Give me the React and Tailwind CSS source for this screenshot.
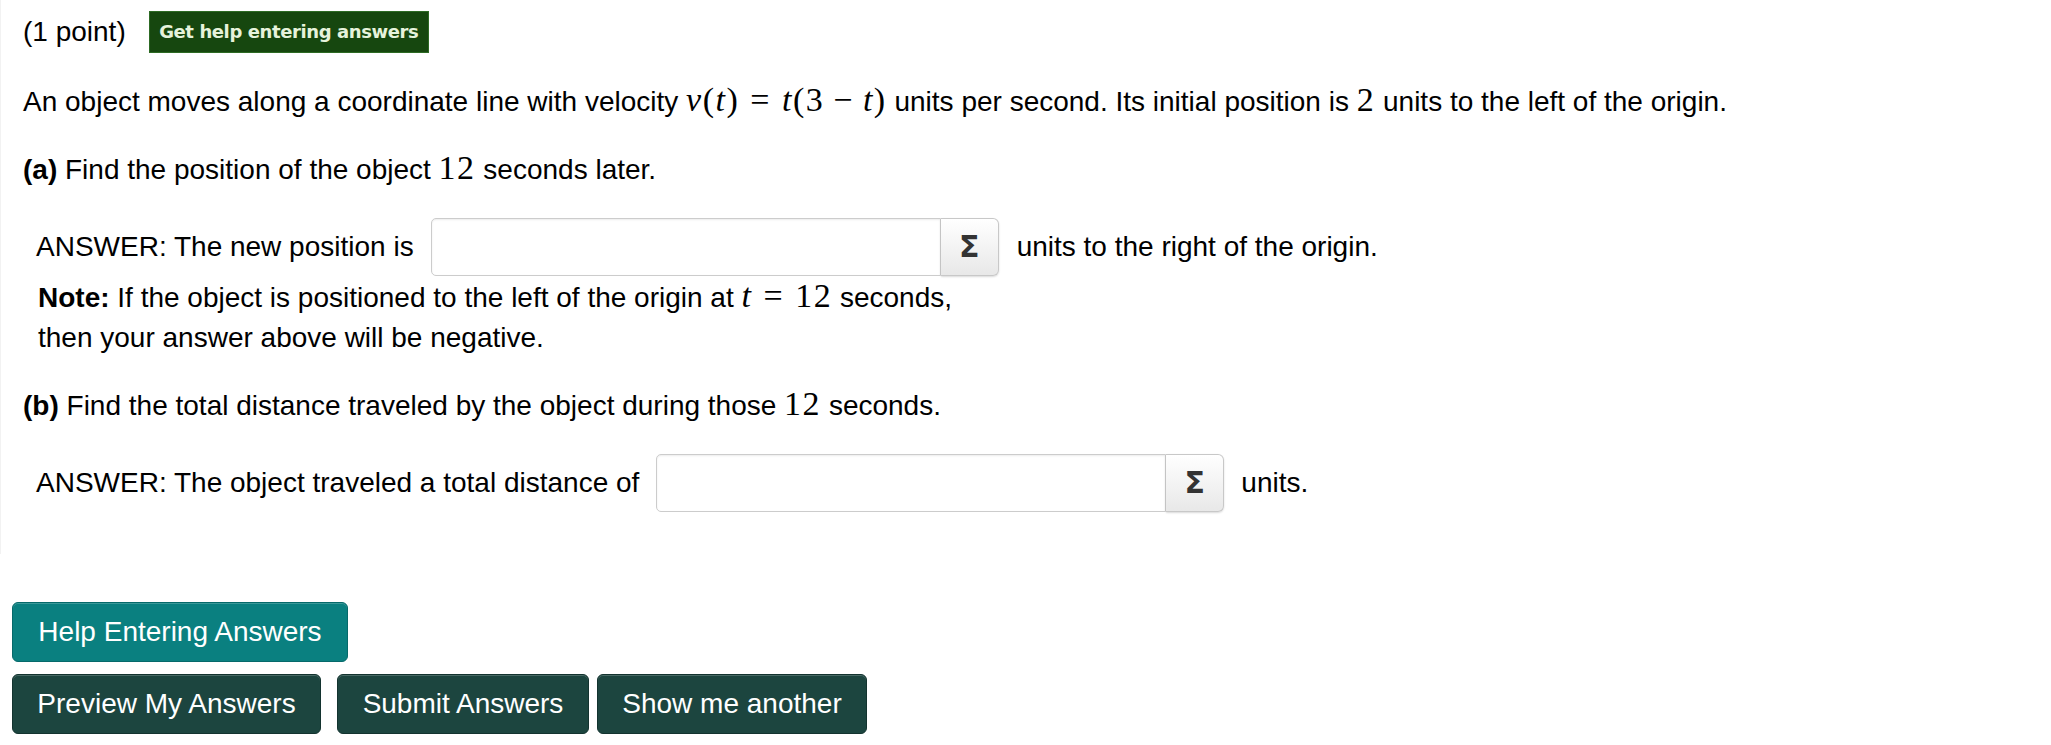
import React from "react";

function M({ children }) {
  return (
    <span className="font-['Liberation_Serif','DejaVu_Serif',serif] text-[34px] leading-none tracking-[1.5px]">{children}</span>
  );
}
function I({ children }) {
  return <span className="italic">{children}</span>;
}
function Op({ children, w }) {
  return <span className={w}>{children}</span>;
}

function AnswerBox({ width }) {
  return (
    <div className={`flex h-[58px] ${width}`}>
      <div className="flex-1 rounded-l-[5px] border border-[#cccccc] bg-white shadow-[inset_0_1px_2px_rgba(0,0,0,0.08)]" />
      <div className="flex w-[58px] items-center justify-center rounded-r-[6px] border border-l-0 border-[#c8c8c8] bg-gradient-to-b from-[#ffffff] to-[#e8e8e8] shadow-[0_1px_2px_rgba(0,0,0,0.15)]">
        <span className="font-['DejaVu_Sans',sans-serif] text-[30px] font-bold leading-none text-[#333333]">Σ</span>
      </div>
    </div>
  );
}

export default function App() {
  return (
    <div className="h-[745px] w-[2051px] overflow-hidden bg-white font-['Liberation_Sans',Arial,sans-serif] text-[28px] leading-[40px] text-black">
      <div className="border-l border-[#f2f2f2] pb-[42px]">
        {/* header */}
        <div className="flex h-[53px] items-end pl-[22px]">
          <div className="flex h-[42px] items-center">
            <span className="mr-[23px]">(1 point)</span>
            <div className="flex h-[42px] w-[280px] items-center justify-center border border-[#2d6a24] bg-[#16470f]">
              <span className="font-['DejaVu_Sans',sans-serif] text-[18px] font-bold leading-none tracking-[-0.4px] text-[#e6f3dc]">
                Get help entering answers
              </span>
            </div>
          </div>
        </div>

        <p className="mt-[29px] pl-[22px]">
          An object moves along a coordinate line with velocity{" "}
          <M>
            <I>v</I>(<I>t</I>)<Op w="mx-[11px]">=</Op><I>t</I>(3<Op w="mx-[9px]">−</Op><I>t</I>)
          </M>{" "}
          units per second. Its initial position is <M>2</M> units to the left of the origin.
        </p>

        <p className="mt-[28px] pl-[22px]">
          <b>(a)</b> Find the position of the object <M>12</M> seconds later.
        </p>

        <div className="mt-[28px] flex items-center pl-[35px]">
          <span>ANSWER: The new position is</span>
          <div className="ml-[17px]">
            <AnswerBox width="w-[568px]" />
          </div>
          <span className="ml-[18px]">units to the right of the origin.</span>
        </div>

        <div className="mt-[2px] pl-[37px]">
          <div>
            <b>Note:</b> If the object is positioned to the left of the origin at{" "}
            <M>
              <I>t</I><Op w="mx-[11px]">=</Op>12
            </M>{" "}
            seconds,
          </div>
          <div>then your answer above will be negative.</div>
        </div>

        <p className="mt-[28px] pl-[22px]">
          <b>(b)</b> Find the total distance traveled by the object during those <M>12</M> seconds.
        </p>

        <div className="mt-[28px] flex items-center pl-[35px]">
          <span>ANSWER: The object traveled a total distance of</span>
          <div className="ml-[17px]">
            <AnswerBox width="w-[568px]" />
          </div>
          <span className="ml-[17px]">units.</span>
        </div>
      </div>

      <div className="mt-[48px] pl-[12px]">
        <button className="flex h-[60px] w-[336px] items-center justify-center rounded-[6px] border border-[#06696a] bg-[#0a8080] text-white shadow-[inset_0_1px_0_rgba(255,255,255,0.2)]">
          Help Entering Answers
        </button>
        <div className="mt-[12px] flex">
          <button className="flex h-[60px] w-[309px] items-center justify-center rounded-[6px] border border-[#13332f] bg-[#1c453f] text-white shadow-[inset_0_1px_0_rgba(255,255,255,0.2)]">
            Preview My Answers
          </button>
          <button className="ml-[16px] flex h-[60px] w-[252px] items-center justify-center rounded-[6px] border border-[#13332f] bg-[#1c453f] text-white shadow-[inset_0_1px_0_rgba(255,255,255,0.2)]">
            Submit Answers
          </button>
          <button className="ml-[8px] flex h-[60px] w-[270px] items-center justify-center rounded-[6px] border border-[#13332f] bg-[#1c453f] text-white shadow-[inset_0_1px_0_rgba(255,255,255,0.2)]">
            Show me another
          </button>
        </div>
      </div>
    </div>
  );
}
